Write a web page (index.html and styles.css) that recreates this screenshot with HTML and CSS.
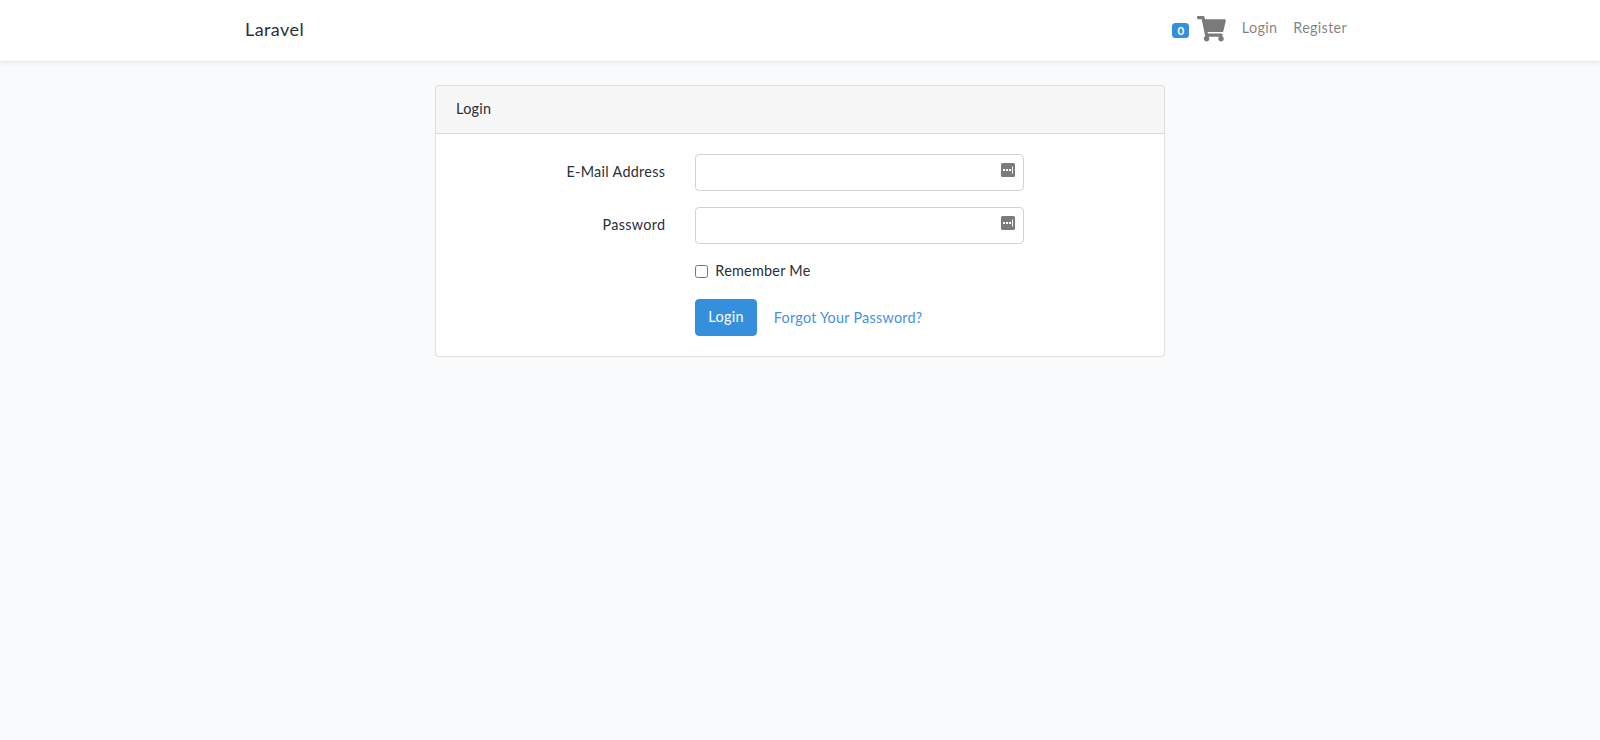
FILE: index.html
```html
<!DOCTYPE html>
<html lang="en">
<head>
<meta charset="utf-8">
<title>Laravel</title>
<link rel="stylesheet" href="styles.css">
</head>
<body>
<nav class="navbar">
  <div class="container nav-inner">
    <a class="brand" href="#">Laravel</a>
    <ul class="nav-right">
      <li class="cart-item">
        <span class="badge">0</span>
        <svg class="cart" viewBox="0 0 576 512" aria-hidden="true"><path d="M528.12 301.319l47.273-208C578.806 78.301 567.391 64 551.99 64H159.208l-9.166-44.81C147.758 8.021 137.93 0 126.529 0H24C10.745 0 0 10.745 0 24v16c0 13.255 10.745 24 24 24h69.883l70.248 343.435C147.325 417.1 136 435.222 136 456c0 30.928 25.072 56 56 56s56-25.072 56-56c0-15.674-6.447-29.835-16.824-40h209.647C430.447 426.165 424 440.326 424 456c0 30.928 25.072 56 56 56s56-25.072 56-56c0-22.172-12.888-41.332-31.579-50.405l5.517-24.276c3.413-15.018-8.002-29.319-23.403-29.319H218.117l-6.545-32h293.145c11.206 0 20.92-7.754 23.403-18.681z"/></svg>
      </li>
      <li><a class="nav-link" href="#">Login</a></li>
      <li><a class="nav-link" href="#">Register</a></li>
    </ul>
  </div>
</nav>
<main class="main">
  <div class="container">
    <section class="card">
      <header class="card-header">Login</header>
      <form class="card-body">
        <div class="form-row">
          <label class="form-label" for="email">E-Mail Address</label>
          <div class="field">
            <input class="input" id="email" type="text">
            <svg class="key" viewBox="0 0 14 14" aria-hidden="true"><rect width="14" height="14" rx="1.5" fill="#7b7b7b"/><rect x="2" y="6" width="2" height="2" fill="#fff"/><rect x="5" y="6" width="2" height="2" fill="#fff"/><rect x="8" y="6" width="2" height="2" fill="#fff"/><rect x="11" y="3.5" width="1" height="7" fill="#fff"/></svg>
          </div>
        </div>
        <div class="form-row">
          <label class="form-label" for="password">Password</label>
          <div class="field">
            <input class="input" id="password" type="password">
            <svg class="key" viewBox="0 0 14 14" aria-hidden="true"><rect width="14" height="14" rx="1.5" fill="#7b7b7b"/><rect x="2" y="6" width="2" height="2" fill="#fff"/><rect x="5" y="6" width="2" height="2" fill="#fff"/><rect x="8" y="6" width="2" height="2" fill="#fff"/><rect x="11" y="3.5" width="1" height="7" fill="#fff"/></svg>
          </div>
        </div>
        <div class="form-row">
          <div class="offset">
            <label class="check"><input class="checkbox" type="checkbox"><span class="check-text">Remember Me</span></label>
          </div>
        </div>
        <div class="form-row last">
          <div class="offset actions">
            <button class="btn" type="button">Login</button>
            <a class="link" href="#">Forgot Your Password?</a>
          </div>
        </div>
      </form>
    </section>
  </div>
</main>
</body>
</html>
```

FILE: styles.css
```css
* { box-sizing: border-box; }
html, body { margin: 0; height: 100%; }
body {
  background: #f8fafc;
  color: #2b3036;
  font-family: "Lato", "Open Sans", sans-serif;
  font-size: 14.4px;
  line-height: 23.04px;
  letter-spacing: .3px;
}
a { text-decoration: none; }
.container { width: 1140px; margin: 0 auto; padding: 0 15px; }
.navbar {
  background: #fff;
  height: 61px;
  box-shadow: 0 2px 4px rgba(0, 0, 0, .075);
}
.nav-inner { display: flex; justify-content: space-between; align-items: center; height: 61px; }
.brand { color: #2b3036; font-size: 18px; letter-spacing: .42px; padding-bottom: 1px; }
.nav-right { display: flex; align-items: flex-start; list-style: none; margin: 0; padding: 0; height: 61px; padding-top: 8px; }
.cart-item { display: flex; align-items: center; padding: 8px; }
.badge {
  background: #3490dc;
  color: #fff;
  font-size: 11.5px;
  font-weight: 700;
  line-height: 11px;
  padding: 2px 5px;
  border-radius: 3.5px;
  margin-right: 8px;
  margin-top: 3px;
  letter-spacing: 0;
}
.cart { width: 28.8px; height: 25.6px; fill: #7a7a7a; display: block; }
.nav-link { display: block; padding: 7.5px 8px 8.5px; color: rgba(0, 0, 0, .5); letter-spacing: .3px; }
.main { padding: 24px 0; }
.card {
  width: 730px;
  margin: 0 auto;
  background: #fff;
  border: 1px solid rgba(0, 0, 0, .125);
  border-radius: 4px;
}
.card-header {
  padding: 11px 20px 13px;
  background: rgba(0, 0, 0, .03);
  border-bottom: 1px solid rgba(0, 0, 0, .125);
  border-radius: 3px 3px 0 0;
}
.card-body { padding: 20px; }
.form-row { display: grid; grid-template-columns: 4fr 6fr 2fr; column-gap: 0; margin: 0 -15px 16px; }
.form-row.last { margin-bottom: 0; }
.form-label { padding: 6px 15px 8px; text-align: right; }
.field { position: relative; padding: 0 15px; }
.input {
  display: block;
  width: 100%;
  height: 37px;
  border: 1px solid #ced4da;
  border-radius: 4px;
  background: #fff;
  outline: 0;
}
.key { position: absolute; right: 24px; top: 9px; width: 14px; height: 14px; }
.offset { grid-column: 2; padding: 0 15px; }
.check { display: flex; align-items: center; height: 23.04px; }
.check-text { padding-bottom: 2px; letter-spacing: .25px; }
.checkbox { width: 13px; height: 13px; margin: 0 7px 0 0; }
.actions { display: flex; align-items: center; }
.btn {
  font: inherit;
  letter-spacing: .3px;
  color: #fff;
  background: #3490dc;
  border: 1px solid #3490dc;
  border-radius: 4px;
  padding: 5px 12px 7px;
  height: 37px;
}
.link { color: #4a90e2; padding: 0 12px 1px; margin-left: 5px; letter-spacing: .25px; }
```
